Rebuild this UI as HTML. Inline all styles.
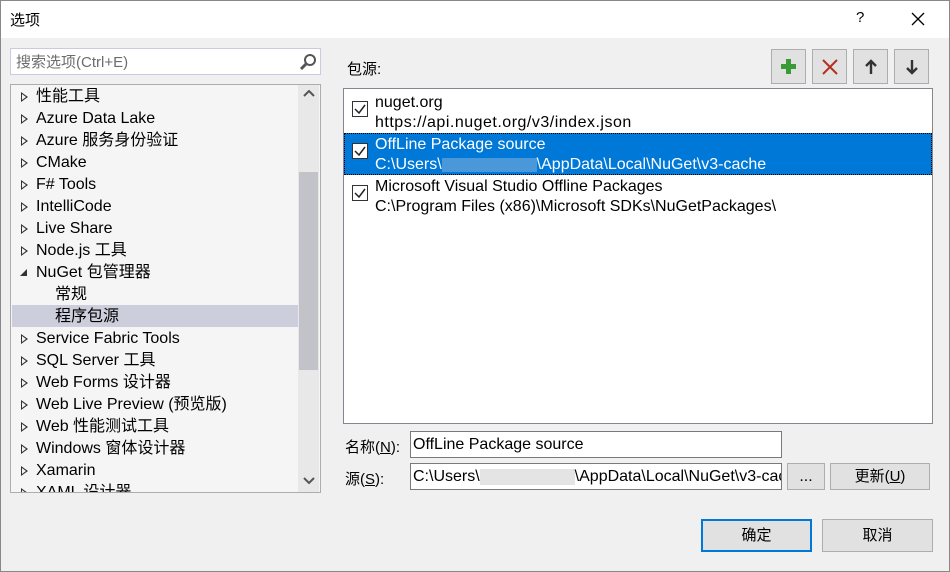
<!DOCTYPE html>
<html><head><meta charset="utf-8"><style>
*{box-sizing:border-box;margin:0;padding:0}
body{width:950px;height:572px;overflow:hidden;font-family:"Liberation Sans","Noto Sans CJK SC",sans-serif;font-size:16px;color:#000;background:#f0f0f0;position:relative}
.win{position:absolute;left:0;top:0;width:950px;height:572px;border:1px solid #888;z-index:5;pointer-events:none}
.title{position:absolute;left:0;top:0;width:950px;height:38px;background:#fff}
.abs{position:absolute}
.tree{left:10px;top:84px;width:311px;height:409px;border:1px solid #adadad;background:#f5f5f5;overflow:hidden}
.row{position:absolute;left:0;height:22px;line-height:24px;white-space:nowrap}
.tri{position:absolute;top:7px;width:0;height:0;border-top:5px solid transparent;border-bottom:5px solid transparent;border-left:7px solid #333}
.tri:after{content:"";position:absolute;left:-6px;top:-3px;border-top:3px solid transparent;border-bottom:3px solid transparent;border-left:4px solid #f5f5f5}
.btn{position:absolute;border:1px solid #adadad;background:#e1e1e1;text-align:center}
.list{left:343px;top:88px;width:590px;height:336px;border:1px solid #828790;background:#fff}
.item{position:absolute;left:0;width:588px;height:42px;line-height:20px}
.cb{position:absolute;left:8px;top:10px;width:16px;height:16px;border:1px solid #333;background:#fff}
.inp{position:absolute;border:1px solid #7a7a7a;background:#fff;height:27px;line-height:25px;padding-left:2px;white-space:nowrap;overflow:hidden}
</style></head><body>
<div class="win"></div>
<div class="title"></div>
<div class="abs" style="left:10px;top:9px;font-size:15px">选项</div>
<div class="abs" style="left:856px;top:9px;font-size:15px">?</div>
<svg class="abs" style="left:911px;top:12px" width="14" height="14"><path d="M1 1L13 13M13 1L1 13" stroke="#000" stroke-width="1.3"/></svg>

<div class="abs" style="left:10px;top:48px;width:311px;height:27px;border:1px solid #c9cbe0;background:#fff;color:#6d6d6d;line-height:27px;padding-left:5px;font-size:15px">搜索选项(Ctrl+E)
<svg class="abs" style="right:3px;top:4px" width="18" height="18"><circle cx="11" cy="7" r="5" fill="none" stroke="#555" stroke-width="2"/><path d="M7 11L2 16" stroke="#555" stroke-width="3"/></svg></div>

<div class="abs tree">
<div class="abs" style="left:287px;top:0;width:21px;height:407px;background:#e8e8e8"></div>
<div class="abs" style="left:288px;top:87px;width:19px;height:198px;background:#c2c3c9"></div>
<svg class="abs" style="left:292px;top:5px" width="12" height="8"><path d="M1 6L6 1L11 6" fill="none" stroke="#555" stroke-width="2"/></svg>
<svg class="abs" style="left:292px;top:392px" width="12" height="8"><path d="M1 1L6 6L11 1" fill="none" stroke="#555" stroke-width="2"/></svg>
<div class="abs" style="left:1px;top:220px;width:286px;height:22px;background:#cccedb"></div>
<div class="row" style="top:0"><span class="tri" style="left:10px"></span><span style="position:absolute;left:25px">性能工具</span></div>
<div class="row" style="top:22px"><span class="tri" style="left:10px"></span><span style="position:absolute;left:25px">Azure Data Lake</span></div>
<div class="row" style="top:44px"><span class="tri" style="left:10px"></span><span style="position:absolute;left:25px">Azure 服务身份验证</span></div>
<div class="row" style="top:66px"><span class="tri" style="left:10px"></span><span style="position:absolute;left:25px">CMake</span></div>
<div class="row" style="top:88px"><span class="tri" style="left:10px"></span><span style="position:absolute;left:25px">F# Tools</span></div>
<div class="row" style="top:110px"><span class="tri" style="left:10px"></span><span style="position:absolute;left:25px">IntelliCode</span></div>
<div class="row" style="top:132px"><span class="tri" style="left:10px"></span><span style="position:absolute;left:25px">Live Share</span></div>
<div class="row" style="top:154px"><span class="tri" style="left:10px"></span><span style="position:absolute;left:25px">Node.js 工具</span></div>
<div class="row" style="top:176px"><svg class="abs" style="left:9px;top:8px" width="8" height="8"><path d="M7 0L7 7L0 7Z" fill="#333"/></svg><span style="position:absolute;left:25px">NuGet 包管理器</span></div>
<div class="row" style="top:198px"><span style="position:absolute;left:44px">常规</span></div>
<div class="row" style="top:220px"><span style="position:absolute;left:44px">程序包源</span></div>
<div class="row" style="top:242px"><span class="tri" style="left:10px"></span><span style="position:absolute;left:25px">Service Fabric Tools</span></div>
<div class="row" style="top:264px"><span class="tri" style="left:10px"></span><span style="position:absolute;left:25px">SQL Server 工具</span></div>
<div class="row" style="top:286px"><span class="tri" style="left:10px"></span><span style="position:absolute;left:25px">Web Forms 设计器</span></div>
<div class="row" style="top:308px"><span class="tri" style="left:10px"></span><span style="position:absolute;left:25px">Web Live Preview (预览版)</span></div>
<div class="row" style="top:330px"><span class="tri" style="left:10px"></span><span style="position:absolute;left:25px">Web 性能测试工具</span></div>
<div class="row" style="top:352px"><span class="tri" style="left:10px"></span><span style="position:absolute;left:25px">Windows 窗体设计器</span></div>
<div class="row" style="top:374px"><span class="tri" style="left:10px"></span><span style="position:absolute;left:25px">Xamarin</span></div>
<div class="row" style="top:396px"><span class="tri" style="left:10px"></span><span style="position:absolute;left:25px">XAML 设计器</span></div>
</div>

<div class="abs" style="left:347px;top:58px;font-size:15px">包源:</div>
<div class="btn" style="left:771px;top:49px;width:35px;height:35px"><svg style="margin-top:8px" width="17" height="17"><path d="M8.5 1V16M1 8.5H16" stroke="#3a9a35" stroke-width="5"/></svg></div>
<div class="btn" style="left:812px;top:49px;width:35px;height:35px"><svg style="margin-top:9px" width="16" height="16"><path d="M1 1L15 15M15 1L1 15" stroke="#b4301e" stroke-width="2"/></svg></div>
<div class="btn" style="left:853px;top:49px;width:35px;height:35px"><svg style="margin-top:9px" width="14" height="16"><path d="M7 15V2M2 7L7 2L12 7" fill="none" stroke="#333" stroke-width="2.4"/></svg></div>
<div class="btn" style="left:894px;top:49px;width:35px;height:35px"><svg style="margin-top:9px" width="14" height="16"><path d="M7 1V14M2 9L7 14L12 9" fill="none" stroke="#333" stroke-width="2.4"/></svg></div>

<div class="abs list">
<div class="item" style="top:2px"><div class="cb"><svg width="14" height="14"><path d="M2 7L6 11L12 3" fill="none" stroke="#222" stroke-width="1.5"/></svg></div><div class="abs" style="left:31px;top:2px">nuget.org<br><span style="letter-spacing:0.5px">https://api.nuget.org/v3/index.json</span></div></div>
<div class="item" style="top:44px;background:#0078d7;color:#fff;border:1px dotted #000"><div class="cb" style="left:7px;top:9px"><svg width="14" height="14"><path d="M2 7L6 11L12 3" fill="none" stroke="#222" stroke-width="1.5"/></svg></div><div class="abs" style="left:30px;top:1px;white-space:nowrap">OffLine Package source<br>C:\Users\<span style="display:inline-block;width:95px;height:14px;background:#4a98da;vertical-align:middle"></span>\AppData\Local\NuGet\v3-cache</div></div>
<div class="item" style="top:86px"><div class="cb"><svg width="14" height="14"><path d="M2 7L6 11L12 3" fill="none" stroke="#222" stroke-width="1.5"/></svg></div><div class="abs" style="left:31px;top:2px;white-space:nowrap">Microsoft Visual Studio Offline Packages<br>C:\Program Files (x86)\Microsoft SDKs\NuGetPackages\</div></div>
</div>

<div class="abs" style="left:345px;top:436px;font-size:15px">名称(<u>N</u>):</div>
<div class="inp" style="left:410px;top:431px;width:372px">OffLine Package source</div>
<div class="abs" style="left:345px;top:468px;font-size:15px">源(<u>S</u>):</div>
<div class="inp" style="left:410px;top:463px;width:372px">C:\Users\<span style="display:inline-block;width:95px;height:16px;background:#e4e4e4;vertical-align:middle"></span>\AppData\Local\NuGet\v3-cache</div>
<div class="btn" style="left:787px;top:463px;width:38px;height:27px;line-height:25px">...</div>
<div class="btn" style="left:830px;top:463px;width:100px;height:27px;line-height:25px;font-size:15px">更新(<u>U</u>)</div>
<div class="btn" style="left:701px;top:519px;width:111px;height:33px;line-height:29px;border:2px solid #0078d7;font-size:15px">确定</div>
<div class="btn" style="left:822px;top:519px;width:111px;height:33px;line-height:31px;font-size:15px">取消</div>
</body></html>
